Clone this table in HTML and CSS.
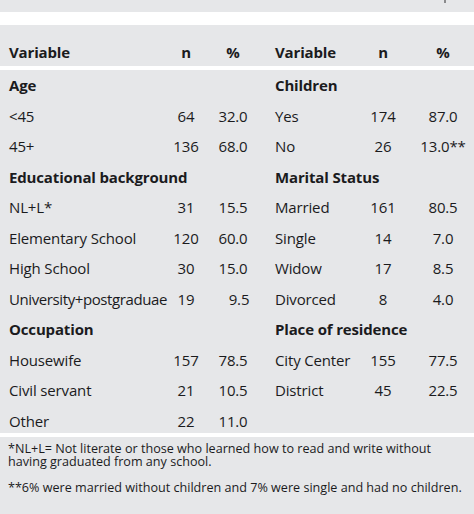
FILE: index.html
```html
<!DOCTYPE html>
<html>
<head>
<meta charset="utf-8">
<link rel="stylesheet" href="styles.css">
</head>
<body>
<div class="page">
  <div class="topstrip"><span class="mark"></span></div>
  <div class="grid head">
    <div class="c1 b">Variable</div><div class="c2 b">n</div><div class="c3 b">%</div>
    <div class="c4 b">Variable</div><div class="c5 b">n</div><div class="c6 b">%</div>
  </div>
  <div class="grid body">
    <div class="c1 b">Age</div><div class="c2"></div><div class="c3"></div>
    <div class="c4 b">Children</div><div class="c5"></div><div class="c6"></div>

    <div class="c1">&lt;45</div><div class="c2">64</div><div class="c3">32.0</div>
    <div class="c4">Yes</div><div class="c5">174</div><div class="c6">87.0</div>

    <div class="c1">45+</div><div class="c2">136</div><div class="c3">68.0</div>
    <div class="c4">No</div><div class="c5">26</div><div class="c6">13.0**</div>

    <div class="c1 b">Educational background</div><div class="c2"></div><div class="c3"></div>
    <div class="c4 b">Marital Status</div><div class="c5"></div><div class="c6"></div>

    <div class="c1">NL+L*</div><div class="c2">31</div><div class="c3">15.5</div>
    <div class="c4">Married</div><div class="c5">161</div><div class="c6">80.5</div>

    <div class="c1">Elementary School</div><div class="c2">120</div><div class="c3">60.0</div>
    <div class="c4">Single</div><div class="c5">14</div><div class="c6">7.0</div>

    <div class="c1">High School</div><div class="c2">30</div><div class="c3">15.0</div>
    <div class="c4">Widow</div><div class="c5">17</div><div class="c6">8.5</div>

    <div class="c1 tight">University+postgraduae</div><div class="c2">19</div><div class="c3 r">9.5</div>
    <div class="c4">Divorced</div><div class="c5">8</div><div class="c6">4.0</div>

    <div class="c1 b">Occupation</div><div class="c2"></div><div class="c3"></div>
    <div class="c4 b">Place of residence</div><div class="c5"></div><div class="c6"></div>

    <div class="c1">Housewife</div><div class="c2">157</div><div class="c3">78.5</div>
    <div class="c4">City Center</div><div class="c5">155</div><div class="c6">77.5</div>

    <div class="c1">Civil servant</div><div class="c2">21</div><div class="c3">10.5</div>
    <div class="c4">District</div><div class="c5">45</div><div class="c6">22.5</div>

    <div class="c1">Other</div><div class="c2">22</div><div class="c3">11.0</div>
    <div class="c4"></div><div class="c5"></div><div class="c6"></div>
  </div>
  <div class="foot">
    <p class="note-first">*NL+L= Not literate or those who learned how to read and write without having graduated from any school.</p>
    <p>**6% were married without children and 7% were single and had no children.</p>
  </div>
</div>
</body>
</html>
```

FILE: styles.css
```css
html, body {
  margin: 0;
  padding: 0;
  background: #ffffff;
}
.page {
  width: 474px;
  height: 514px;
  overflow: hidden;
  font-family: "Open Sans", "DejaVu Sans", sans-serif;
  color: #1b1b1d;
  position: relative;
}
.topstrip {
  height: 12px;
  background: #e6e7e9;
  margin-bottom: 13px;
  position: relative;
}
.mark {
  position: absolute;
  left: 444px;
  top: 0;
  width: 2px;
  height: 3px;
  background: #8a8a8c;
}
.grid {
  display: grid;
  grid-template-columns: 157px 40px 54px 103px 40px 71px;
  padding-left: 9px;
  background: #e6e7e9;
  font-size: 15px;
  letter-spacing: -0.15px;
}
.head {
  height: 41px;
  align-items: end;
  margin-bottom: 4px;
  box-sizing: border-box;
}
.head > div {
  line-height: 20px;
  padding-bottom: 4px;
}
.body {
  grid-auto-rows: 30.5px;
  height: 363px;
}
.body > div {
  line-height: 30.5px;
}
.b { font-weight: 700; }
.c1 { white-space: nowrap; }
.c1.tight { letter-spacing: -0.4px; }
.c2, .c3, .c5, .c6 { text-align: center; white-space: nowrap; }
.c3.r { padding-left: 12px; }
.c4 { padding-left: 15px; white-space: nowrap; }
.c6 { padding-left: 9px; }
.foot {
  margin-top: 4px;
  background: #e6e7e9;
  height: 77px;
  padding: 4.7px 8px 0 8px;
  font-size: 12.6px;
  line-height: 13.5px;
  box-sizing: border-box;
}
.foot p {
  margin: 0 0 12.4px 0;
}
.note-first {
  max-width: 425px;
}
```
